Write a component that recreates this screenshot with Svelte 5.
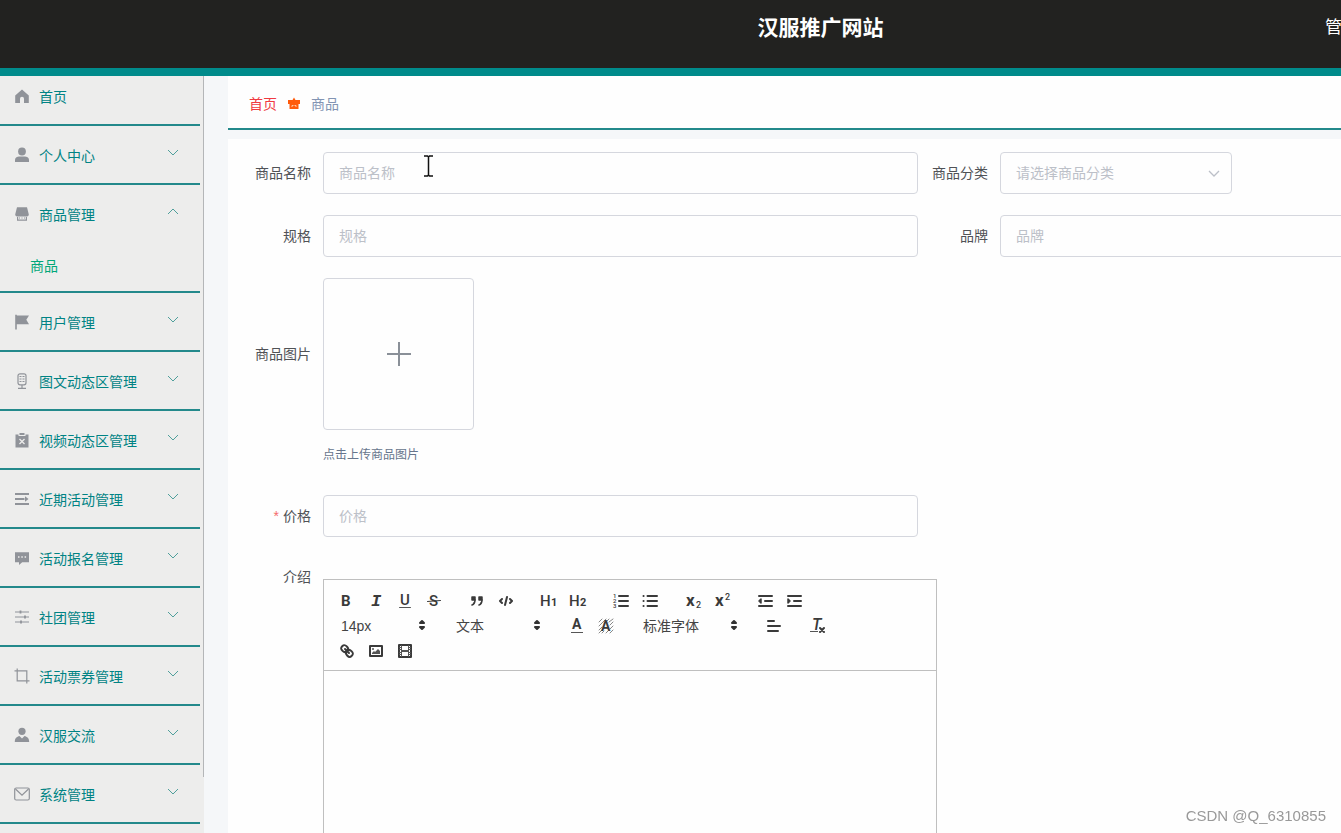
<script>
  let name = $state("");
  let spec = $state("");
  let brand = $state("");
  let price = $state("");
  let openMenu = $state("商品管理");

  const menus = [
    { title: "个人中心", icon: "user" },
    { title: "商品管理", icon: "goods", children: ["商品"] },
    { title: "用户管理", icon: "flag" },
    { title: "图文动态区管理", icon: "mic" },
    { title: "视频动态区管理", icon: "clipboard" },
    { title: "近期活动管理", icon: "unfold" },
    { title: "活动报名管理", icon: "chat" },
    { title: "社团管理", icon: "sliders" },
    { title: "活动票券管理", icon: "crop" },
    { title: "汉服交流", icon: "person" },
    { title: "系统管理", icon: "mail" },
  ];

  function toggle(menu) {
    openMenu = openMenu === menu.title ? "" : menu.title;
  }

  // toolbar groups, in the order they wrap
  const toolbar = [
    ["bold", "italic", "underline", "strike"],
    ["blockquote", "code"],
    ["h1", "h2"],
    ["ordered", "bullet"],
    ["sub", "super"],
    ["outdent", "indent"],
    [{ label: "字号", options: ["14px", "16px", "18px"] }],
    [{ label: "标题", options: ["文本", "标题1", "标题2"] }],
    ["color", "background"],
    [{ label: "字体", options: ["标准字体", "衬线字体", "等宽字体"], wide: true }],
    ["align"],
    ["clean"],
    ["link", "image", "video"],
  ];
</script>

{#snippet menuIcon(icon)}
  <svg class="menu-icon" viewBox="0 0 16 16" aria-hidden="true">
    {#if icon === "home"}
      <path d="M8 1.500 1.200 7.600V15H6v-4.200a2 2 0 0 1 4 0V15h4.800V7.600z" />
    {:else if icon === "user"}
      <circle cx="8" cy="4.500" r="3.900" />
      <path d="M1 15v-2.200C1 10.600 3.500 9.600 5 9.600h6c1.500 0 4 1 4 3.200V15z" />
    {:else if icon === "goods"}
      <path d="M3 1.200h10l1.800 7.300c0 1.300-1 2-1.800 2H3c-.8 0-1.800-.7-1.800-2z" />
      <path class="line" d="M3.600 11v3.200h8.800V11" />
      <path class="line" d="M5 12h1M7.500 12h1M10 12h1" />
    {:else if icon === "flag"}
      <path d="M1.200.8h1.600V15.500H1.200zM2.800 1.500H15l-2.700 4.300L15 10.200H2.800z" />
    {:else if icon === "mic"}
      <rect class="line" x="4" y=".8" width="8" height="11" rx="2" />
      <path class="line" d="M5.500 3.500h2M8.500 3.500h2M5.500 6h2M8.500 6h2M5.500 8.500h2M8.500 8.500h2M8 12v3M4 15.300h8" />
    {:else if icon === "clipboard"}
      <path fill-rule="evenodd" d="M1.500 2.500h3V4h7V2.500h3v13h-13zM5.500 1h5v2h-5z" />
      <path class="cut" d="m5.500 7 5 5M10.500 7l-5 5" />
    {:else if icon === "unfold"}
      <path class="line thick" d="M1 3h14M1 8h9.500M1 13h14" />
      <path d="m11 5.300 3.500 2.700-3.500 2.700z" />
    {:else if icon === "chat"}
      <path d="M1 2.200h14v10H8.200L5 15v-2.800H1z" />
      <path class="cut" d="M4 7h1.500M7.300 7h1.500M10.600 7h1.500" />
    {:else if icon === "sliders"}
      <path class="line" d="M1 3h14M1 8h14M1 13h14" />
      <path class="line thick" d="M6.500 1.500v3M11 6.500v3M7 11.500v3" />
    {:else if icon === "crop"}
      <path class="line" d="M.5 2.800h12.300v12.700M3.200.5v12.300h12.300" />
    {:else if icon === "person"}
      <circle cx="8" cy="4.300" r="3.600" />
      <path d="M.8 15c0-3.800 2-5.300 4.700-6L8 11.500 10.500 9c2.700.7 4.700 2.200 4.700 6z" />
    {:else if icon === "mail"}
      <rect class="line" x=".7" y="2" width="14.600" height="12" rx="1.500" />
      <path class="line" d="m1.500 3 6.500 6.200L14.500 3" />
    {/if}
  </svg>
{/snippet}

{#snippet toolIcon(icon)}
  <svg class="tool-icon" viewBox="0 0 18 18" aria-hidden="true">
    {#if icon === "bold"}
      <text class="glyph" x="3" y="14" font-size="15">B</text>
    {:else if icon === "italic"}
      <text class="mono" x="4" y="14" font-size="17">I</text>
    {:else if icon === "underline"}
      <text class="medium" x="4" y="13" font-size="15">U</text>
      <rect class="fill" x="3" y="15" width="12" height="1" rx=".5" />
    {:else if icon === "strike"}
      <text class="medium" x="4" y="14" font-size="15">S</text>
      <line class="thin" x1="2.500" x2="15.500" y1="9.500" y2="8.500" />
    {:else if icon === "blockquote"}
      <rect class="both" x="4" y="5" width="3" height="3" />
      <rect class="both" x="11" y="5" width="3" height="3" />
      <path class="both" d="M7 8c0 4.031-3 5-3 5M14 8c0 4.031-3 5-3 5" />
    {:else if icon === "code"}
      <path d="M5 7 3 9l2 2M13 7l2 2-2 2M10 5 8 13" />
    {:else if icon === "h1" || icon === "h2"}
      <text class="medium" x="0" y="14" font-size="15">H</text>
      <text class="glyph" x="11" y="14" font-size="11">{icon[1]}</text>
    {:else if icon === "ordered"}
      <path d="M7 4h9M7 9h9M7 14h9" />
      <text class="medium" x="1" y="6" font-size="6">1</text>
      <text class="medium" x="1" y="11" font-size="6">2</text>
      <text class="medium" x="1" y="16" font-size="6">3</text>
    {:else if icon === "bullet"}
      <path d="M6.500 4H16M6.500 9H16M6.500 14H16M2.500 4h.1M2.500 9h.1M2.500 14h.1" />
    {:else if icon === "sub"}
      <text class="glyph" x="2" y="14" font-size="17">x</text>
      <text class="medium" x="12" y="16" font-size="9">2</text>
    {:else if icon === "super"}
      <text class="glyph" x="2" y="14" font-size="17">x</text>
      <text class="medium" x="12" y="8" font-size="9">2</text>
    {:else if icon === "outdent"}
      <path d="M3 4h13M9 9h7M3 14h13" />
      <path class="both" d="M5 7v4L3 9z" />
    {:else if icon === "indent"}
      <path d="M3 4h13M9 9h7M3 14h13" />
      <path class="both" d="M3 7v4l2-2z" />
    {:else if icon === "color"}
      <text class="glyph" x="4" y="12" font-size="14">A</text>
      <rect class="fill" x="3" y="15" width="12" height="1" />
    {:else if icon === "background"}
      <path class="hatch" d="M2 5l3-3M2 9l7-7M2 13l3-3M2 16l3-3M9 5l3-3M12 5l4-3M13 8l3-3M13 12l3-3M13 16l3-3M5 16l2-2M9 16l2-2" />
      <text class="glyph" x="4" y="14" font-size="14">A</text>
    {:else if icon === "align"}
      <path d="M3 4h6M3 9h12M3 14h10" />
    {:else if icon === "clean"}
      <text class="medium slant" x="4" y="13" font-size="16">T</text>
      <path d="m12 11 4 4M16 11l-4 4" />
      <rect class="fill" x="2" y="14" width="8" height="1" />
    {:else if icon === "link"}
      <path d="m7 7 4 4M8.900 4.577a3.476 3.476 0 0 1 .36 4.679A3.476 3.476 0 0 1 4.577 8.900C3.185 7.500 2.035 6.400 4.217 4.217S7.500 3.185 8.900 4.577Z" />
      <path d="M13.423 9.100a3.476 3.476 0 0 0-4.679-.36 3.476 3.476 0 0 0 .36 4.679c1.392 1.392 2.500 2.542 4.679.36S14.815 10.500 13.423 9.100Z" />
    {:else if icon === "image"}
      <rect x="3" y="4" width="12" height="10" />
      <circle class="fill" cx="6" cy="7" r="1" />
      <path class="fill" d="M5 12v-1l2-2 1 1 3-3 2 2v3z" />
    {:else if icon === "video"}
      <rect x="3" y="3" width="12" height="12" />
      <path class="fill" d="M5 3h1v12H5zM12 3h1v12h-1zM5 8h8v2H5zM3 5h3v1H3zM3 7h3v1H3zM3 10h3v1H3zM3 12h3v1H3zM12 5h3v1h-3zM12 7h3v1h-3zM12 10h3v1h-3zM12 12h3v1h-3z" />
    {/if}
  </svg>
{/snippet}

<div class="page">
  <header>
    <h1>汉服推广网站</h1>
    <span class="admin">管</span>
  </header>

  <div class="body">
    <aside>
      <nav>
        <div class="item home">
          <a class="item-title" href="#home">
            {@render menuIcon("home")}
            <span>首页</span>
          </a>
        </div>
        {#each menus as menu}
          <div class="item">
            <button class="item-title" aria-expanded={openMenu === menu.title} onclick={() => toggle(menu)}>
              {@render menuIcon(menu.icon)}
              <span>{menu.title}</span>
              <svg class="chevron" class:open={openMenu === menu.title} viewBox="0 0 12 7" aria-hidden="true">
                <path d="m1 1 5 5 5-5" />
              </svg>
            </button>
            {#if menu.children && openMenu === menu.title}
              {#each menu.children as child}
                <a class="child" href="#goods">{child}</a>
              {/each}
            {/if}
          </div>
        {/each}
      </nav>
    </aside>

    <main>
      <div class="breadcrumb">
        <a href="#home">首页</a>
        <svg viewBox="0 0 14 14" aria-hidden="true">
          <path d="M7 1.500 8.500 4H13v4h-1.500v5h-9V8H1V4h4.500z" />
          <path class="petal" d="M5 11V9.500h1.500M9 11V9.500H7.500" />
        </svg>
        <span>商品</span>
      </div>

      <form onsubmit={(e) => e.preventDefault()}>
        <div class="row">
          <div class="field main-field">
            <label for="name">商品名称</label>
            <div class="control">
              <input id="name" type="text" placeholder="商品名称" bind:value={name} />
              <svg class="caret" viewBox="0 0 11 22" aria-hidden="true">
                <path d="M1 1h3.500l1 1 1-1H10M5.500 2v18M1 21h3.500l1-1 1 1H10" />
              </svg>
            </div>
          </div>
          <div class="field">
            <label for="category">商品分类</label>
            <div class="control select">
              <select id="category">
                <option>请选择商品分类</option>
              </select>
              <svg class="arrow" viewBox="0 0 12 7" aria-hidden="true"><path d="m1 1 5 5 5-5" /></svg>
            </div>
          </div>
        </div>

        <div class="row">
          <div class="field main-field">
            <label for="spec">规格</label>
            <div class="control">
              <input id="spec" type="text" placeholder="规格" bind:value={spec} />
            </div>
          </div>
          <div class="field bleed">
            <label for="brand">品牌</label>
            <div class="control">
              <input id="brand" type="text" placeholder="品牌" bind:value={brand} />
            </div>
          </div>
        </div>

        <div class="row">
          <div class="field upload-field">
            <label for="picture">商品图片</label>
            <div>
              <button id="picture" class="upload" type="button" aria-label="上传商品图片">
                <svg viewBox="0 0 24 24" aria-hidden="true"><path d="M12 0v24M0 12h24" /></svg>
              </button>
              <p class="hint">点击上传商品图片</p>
            </div>
          </div>
        </div>

        <div class="row">
          <div class="field main-field">
            <label for="price"><span class="required">*</span>价格</label>
            <div class="control">
              <input id="price" type="text" placeholder="价格" bind:value={price} />
            </div>
          </div>
        </div>

        <div class="row">
          <div class="field editor-field">
            <label for="intro">介绍</label>
            <div class="editor">
              <div class="toolbar">
                {#each toolbar as group}
                  <span class="group">
                    {#each group as tool}
                      {#if tool.options}
                        <span class="picker" class:wide={tool.wide}>
                          <select aria-label={tool.label}>
                            {#each tool.options as option}
                              <option>{option}</option>
                            {/each}
                          </select>
                          <svg viewBox="0 0 18 18" aria-hidden="true">
                            <path d="m7 11 2 2 2-2zM7 7l2-2 2 2z" />
                          </svg>
                        </span>
                      {:else}
                        <button class="tool" type="button" aria-label={tool}>
                          {@render toolIcon(tool)}
                        </button>
                      {/if}
                    {/each}
                  </span>
                {/each}
              </div>
              <textarea id="intro"></textarea>
            </div>
          </div>
        </div>
      </form>
    </main>
  </div>

  <div class="watermark">CSDN @Q_6310855</div>
</div>

<style>
  :global(body) {
    margin: 0;
    background: #f5f7f9;
  }

  .page {
    height: 100vh;
    overflow: hidden;
    display: flex;
    flex-direction: column;
    font-family: "Liberation Sans", "Noto Sans CJK SC", sans-serif;
    font-size: 14px;
    color: #606266;
  }

  .page * {
    box-sizing: border-box;
  }

  button,
  input,
  select,
  textarea {
    font: inherit;
    color: inherit;
    margin: 0;
  }

  a {
    text-decoration: none;
  }

  header {
    flex: none;
    height: 76px;
    padding: 0 0 12px 300px;
    background: #222220;
    border-bottom: 8px solid #008b8b;
    display: grid;
    grid-template-columns: 1fr auto 1fr;
    color: #fff;
    overflow: hidden;
  }

  header h1 {
    grid-column: 2;
    margin: 0;
    font-size: 21px;
    line-height: 56px;
    font-weight: 700;
  }

  .admin {
    justify-self: end;
    width: 16px;
    font-size: 17px;
    line-height: 56px;
    white-space: nowrap;
  }

  .body {
    flex: 1;
    min-height: 0;
    display: flex;
  }

  /* -- sidebar -- */

  aside {
    position: relative;
    flex: none;
    width: 204px;
    background: #ededec;
    overflow: hidden;
  }

  aside::after {
    content: "";
    position: absolute;
    top: 0;
    right: 0;
    width: 1px;
    height: calc(100% - 56px);
    background: #b4b6b8;
  }

  nav {
    width: 200px;
  }

  .item {
    border-bottom: 2px solid #23898b;
  }

  .item-title {
    width: 100%;
    height: 57px;
    padding: 0 21px 0 14px;
    border: 0;
    background: none;
    display: flex;
    align-items: center;
    gap: 9px;
    color: #008384;
    text-align: left;
    cursor: pointer;
  }

  .home .item-title {
    height: 48px;
    padding-bottom: 8px;
  }

  .item-title span {
    flex: 1;
  }

  .child {
    display: block;
    padding-left: 30px;
    line-height: 49px;
    color: #00a778;
  }

  .menu-icon {
    flex: none;
    width: 16px;
    height: 16px;
    fill: #909399;
  }

  .menu-icon .line {
    fill: none;
    stroke: #909399;
    stroke-width: 1.200;
  }

  .menu-icon .thick {
    stroke-width: 1.800;
  }

  .menu-icon .cut {
    fill: none;
    stroke: #ededec;
    stroke-width: 1.300;
  }

  .chevron {
    width: 12px;
    height: 7px;
    margin-bottom: 4px;
    fill: none;
    stroke: #4f9f9b;
  }

  .chevron.open {
    transform: rotate(180deg);
  }

  /* -- content -- */

  main {
    flex: 1;
    min-width: 0;
    padding-left: 24px;
    display: flex;
    flex-direction: column;
    gap: 9px;
  }

  .breadcrumb {
    flex: none;
    height: 54px;
    padding: 2px 0 0 21px;
    background: #fefefe;
    border-bottom: 2px solid #23898b;
    display: flex;
    align-items: center;
    gap: 10px;
    color: #8294b3;
  }

  .breadcrumb a {
    color: #f03a41;
  }

  .breadcrumb svg {
    width: 14px;
    height: 14px;
    fill: #ff5a0a;
  }

  .breadcrumb .petal {
    fill: none;
    stroke: #ffc9a8;
  }

  form {
    flex: 1;
    min-height: 0;
    padding-top: 13px;
    background: #fefefe;
    overflow: hidden;
    display: flex;
    flex-direction: column;
    gap: 21px;
  }

  .row {
    display: flex;
  }

  .field {
    flex: 1;
    display: flex;
  }

  .field label {
    flex: none;
    width: 82px;
    padding-right: 12px;
    line-height: 42px;
    text-align: right;
    white-space: nowrap;
    color: #505256;
  }

  .main-field label,
  .upload-field label,
  .editor-field label {
    width: 95px;
  }

  .main-field {
    flex: none;
    width: 62%;
  }

  .bleed {
    margin-right: -24px;
  }

  .required {
    margin-right: 4px;
    color: #f56c6c;
  }

  .control {
    position: relative;
    flex: 1;
  }

  .control input,
  .control select {
    display: block;
    width: 100%;
    height: 42px;
    padding: 0 15px;
    border: 1px solid #d5d7de;
    border-radius: 4px;
    background: #fefefe;
    outline: none;
    appearance: none;
  }

  .control input::placeholder {
    color: #bcc0c8;
    opacity: 1;
  }

  .select {
    flex: none;
    width: 232px;
  }

  .control select {
    color: #bcc0c8;
  }

  .arrow {
    position: absolute;
    top: 18px;
    right: 12px;
    width: 12px;
    height: 7px;
    fill: none;
    stroke: #bcc0c8;
    stroke-width: 1.300;
    pointer-events: none;
  }

  /* text pointer over the first input */
  .caret {
    position: absolute;
    top: 3px;
    left: 100px;
    width: 11px;
    height: 22px;
    fill: none;
    stroke: #111;
    stroke-width: 1.500;
    pointer-events: none;
  }

  .upload-field label {
    line-height: 152px;
  }

  .upload {
    width: 151px;
    height: 152px;
    padding: 0;
    border: 1px solid #d5d7de;
    border-radius: 4px;
    background: #fefefe;
    display: grid;
    place-items: center;
    cursor: pointer;
  }

  .upload svg {
    width: 24px;
    height: 24px;
    fill: none;
    stroke: #8a9098;
    stroke-width: 2;
  }

  .hint {
    margin: 15px 0 9px;
    font-size: 12px;
    line-height: 20px;
    color: #66758c;
  }

  /* -- rich text editor -- */

  .editor-field {
    flex: none;
    width: calc(62% + 19px);
  }

  .editor-field label {
    line-height: 38px;
  }

  .editor {
    flex: 1;
    margin-top: 21px;
    border: 1px solid #bfbfbf;
  }

  .toolbar {
    padding: 8px 8px 7px;
    border-bottom: 1px solid #bfbfbf;
    display: flex;
    flex-wrap: wrap;
  }

  .group {
    margin-right: 14px;
    display: flex;
  }

  .tool {
    width: 29px;
    height: 25px;
    padding: 0;
    border: 0;
    background: none;
    display: grid;
    place-items: center;
    cursor: pointer;
  }

  .tool-icon {
    width: 18px;
    height: 18px;
    fill: none;
    stroke: #3a3a3a;
    stroke-width: 2;
    stroke-linecap: round;
    stroke-linejoin: round;
    overflow: visible;
  }

  .tool-icon text {
    fill: #3a3a3a;
    stroke: none;
    font-family: Roboto, "Liberation Sans", sans-serif;
    font-weight: 500;
  }

  .tool-icon .glyph,
  .tool-icon .mono {
    font-weight: 700;
  }

  .tool-icon .mono {
    font-family: "Liberation Mono", monospace;
    font-style: italic;
  }

  .tool-icon .slant {
    font-style: italic;
  }

  .tool-icon .fill {
    fill: #555;
    stroke: none;
  }

  .tool-icon .both {
    fill: #3a3a3a;
    stroke-width: 1.500;
  }

  .tool-icon .thin,
  .tool-icon .hatch {
    stroke-width: 1;
  }

  .tool-icon .hatch {
    stroke: #888;
  }

  .picker {
    position: relative;
    width: 101px;
    height: 25px;
  }

  .picker.wide {
    width: 111px;
  }

  .picker select {
    width: 100%;
    height: 25px;
    padding: 0 9px;
    border: 0;
    background: none;
    appearance: none;
    color: #444;
  }

  .picker svg {
    position: absolute;
    top: 3px;
    right: 2px;
    width: 18px;
    height: 18px;
    fill: #333;
    stroke: #333;
    stroke-width: 2;
    stroke-linejoin: round;
    pointer-events: none;
  }

  textarea {
    display: block;
    width: 100%;
    height: 400px;
    padding: 12px 15px;
    border: 0;
    background: none;
    outline: none;
    resize: none;
  }

  .watermark {
    position: fixed;
    right: 15px;
    bottom: 8px;
    font-size: 15px;
    line-height: 18px;
    color: #999;
  }
</style>
